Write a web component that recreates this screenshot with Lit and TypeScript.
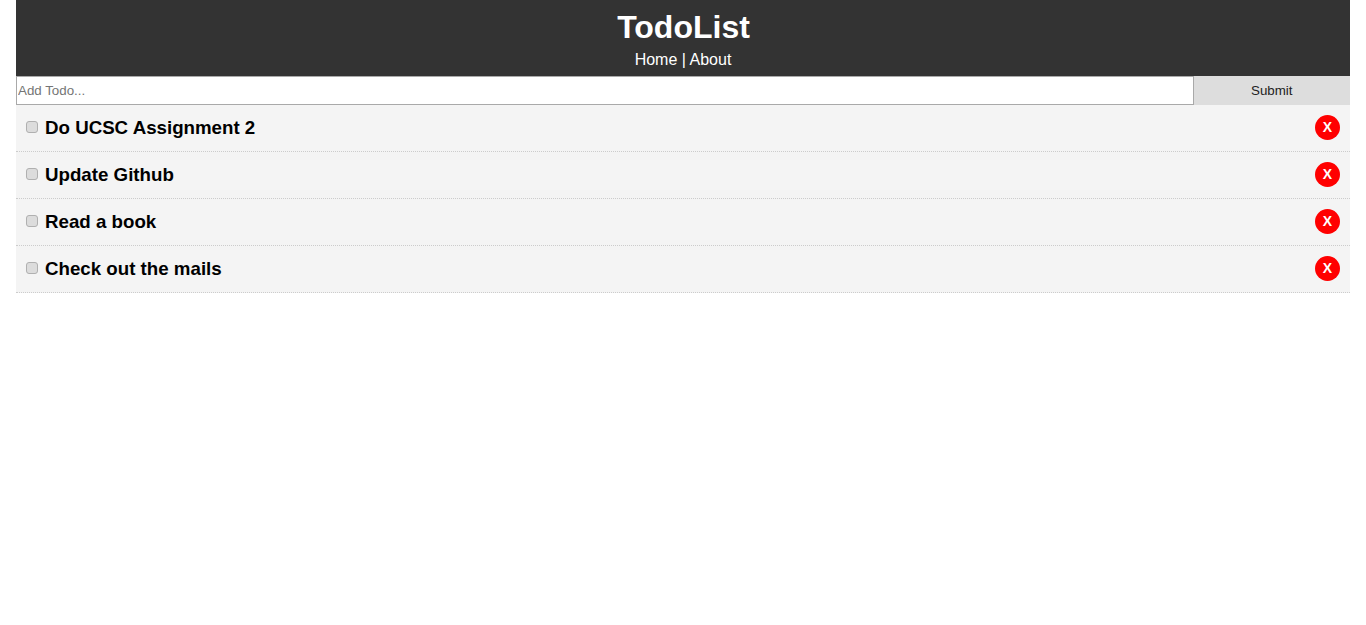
import { LitElement, html, css } from "lit";
import { customElement } from "lit/decorators.js";

const todos = ["Do UCSC Assignment 2", "Update Github", "Read a book", "Check out the mails"];

@customElement("app-root")
export class AppRoot extends LitElement {
  static styles = css`
    :host { display: block; padding: 0 16px; font-family: "Liberation Sans", Arial, sans-serif; line-height: 1.4; color: #000; }
    .header { background: #333; color: #fff; text-align: center; padding: 10px 0 0; height: 76px; box-sizing: border-box; }
    h1 { margin: 0; padding-left: 1px; font-size: 32px; line-height: 34px; font-weight: 700; }
    .nav { font-size: 16px; line-height: 22px; margin-top: 4px; padding-top: 1px; }
    .nav a { color: #fff; text-decoration: none; }
    form { display: flex; height: 29px; margin: 0; }
    .input { flex: 15; min-width: 0; box-sizing: border-box; border: 1px solid #a9a9a9; padding: 1px; font: 13.33px "Liberation Sans", Arial, sans-serif; }
    .input::placeholder { color: #757575; }
    .submit { flex: 2; min-width: 0; box-sizing: border-box; background: #ddd; border: 0; font: 13.33px "Liberation Sans", Arial, sans-serif; color: #222; padding: 0; }
    .item { display: flex; align-items: center; height: 47px; box-sizing: border-box; background: #f4f4f4; border-bottom: 1px dotted #ccc; padding: 0 10px; font-size: 18.72px; font-weight: 700; }
    .check { appearance: none; width: 12px; height: 12px; margin: 0 7px 2px 0; box-sizing: border-box; background: #dcdcdc; border: 1px solid #b0b0b0; border-radius: 3px; }
    .text { flex: 1; }
    .del { width: 25px; height: 25px; margin-bottom: 2px; border-radius: 50%; background: #f00; color: #fff; border: 0; padding: 0; font: 700 14px "Liberation Sans", Arial, sans-serif; }
  `;
  render() {
    return html`
      <header class="header">
        <h1>TodoList</h1>
        <div class="nav"><a href="#">Home</a> | <a href="#">About</a></div>
      </header>
      <form @submit=${(e: Event) => e.preventDefault()}>
        <input class="input" type="text" placeholder="Add Todo..." />
        <input class="submit" type="submit" value="Submit" />
      </form>
      ${todos.map(t => html`<div class="item"><input class="check" type="checkbox" /><span class="text">${t}</span><button class="del">X</button></div>`)}
    `;
  }
}
